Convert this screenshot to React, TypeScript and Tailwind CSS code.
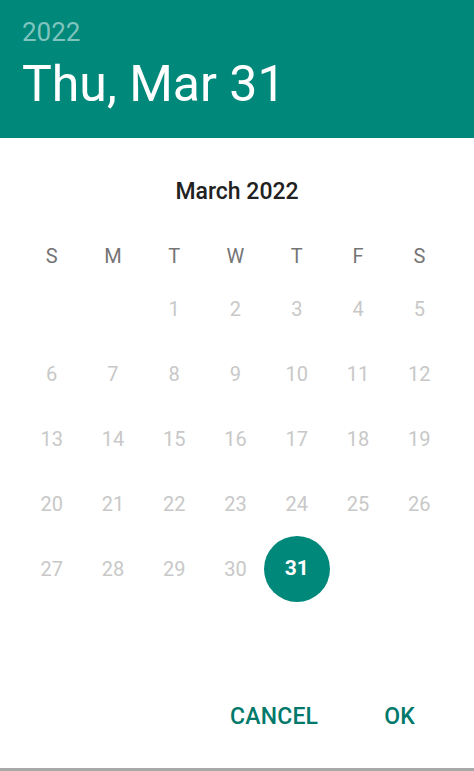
import React from "react";

const weeks: (number | null)[][] = [
  [null, null, 1, 2, 3, 4, 5],
  [6, 7, 8, 9, 10, 11, 12],
  [13, 14, 15, 16, 17, 18, 19],
  [20, 21, 22, 23, 24, 25, 26],
  [27, 28, 29, 30, 31, null, null],
];

export default function App() {
  return (
    <div className="w-[474px] h-[771px] bg-white flex flex-col" style={{ fontFamily: "Roboto, 'Noto Sans', sans-serif" }}>
      <div className="h-[138px] bg-[#00887a] px-[22px] pt-[16px]">
        <div className="text-[26px] leading-[32px] text-[#7fc4bd]">2022</div>
        <div className="text-[50px] leading-[56px] text-white mt-[8px]">Thu, Mar 31</div>
      </div>
      <div className="flex-1 flex flex-col">
        <div className="text-center text-[23px] font-medium text-[#212121] mt-[39px] leading-[30px]">March 2022</div>
        <div className="ml-[21px] w-[429px] mt-[29px]">
          <div className="grid grid-cols-7 h-[40px] items-center">
            {["S", "M", "T", "W", "T", "F", "S"].map((d, i) => (
              <div key={i} className="text-center text-[20px] text-[#757575]">{d}</div>
            ))}
          </div>
          {weeks.map((w, wi) => (
            <div key={wi} className="grid grid-cols-7 h-[65px] items-center">
              {w.map((d, di) => (
                <div key={di} className="flex items-center justify-center">
                  {d === 31 ? (
                    <div className="shrink-0 w-[66px] h-[66px] rounded-full bg-[#00887a] flex items-center justify-center text-white font-bold text-[21px]">31</div>
                  ) : (
                    <span className="text-[20px] text-[#c8c8c8]">{d ?? ""}</span>
                  )}
                </div>
              ))}
            </div>
          ))}
        </div>
        <div className="flex-1" />
        <div className="flex justify-end items-center h-[40px] mb-[31px] pr-[59px] gap-[66px]">
          <span className="text-[23px] font-medium text-[#00796b] tracking-[0.2px]">CANCEL</span>
          <span className="text-[23px] font-medium text-[#00796b] tracking-[0.2px]">OK</span>
        </div>
      </div>
      <div className="h-[3px] bg-[#a8a8a8]" />
    </div>
  );
}
